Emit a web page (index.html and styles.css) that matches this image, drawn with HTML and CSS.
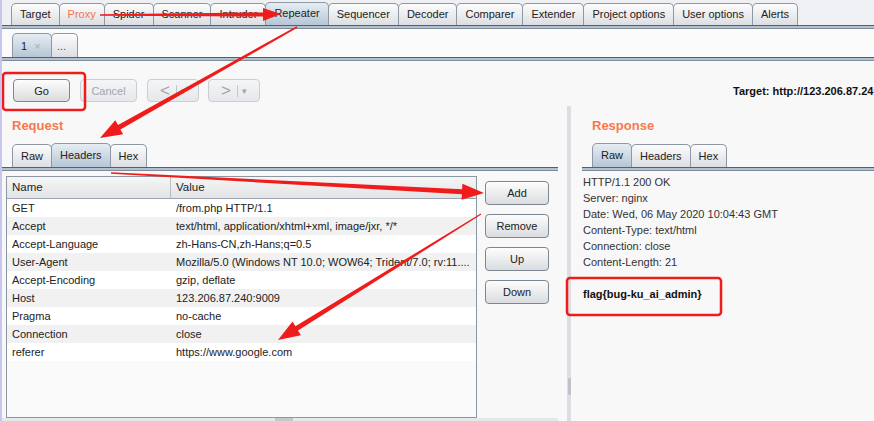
FILE: index.html
```html
<!DOCTYPE html>
<html lang="en">
<head>
  <meta charset="UTF-8">
  <title>Burp Suite - Repeater</title>
  <link rel="stylesheet" href="styles.css">
</head>
<body>
  <div class="app">
    <div class="maintabs">
      <div class="tab">Target</div>
      <div class="tab proxy">Proxy</div>
      <div class="tab">Spider</div>
      <div class="tab">Scanner</div>
      <div class="tab">Intruder</div>
      <div class="tab sel">Repeater</div>
      <div class="tab">Sequencer</div>
      <div class="tab">Decoder</div>
      <div class="tab">Comparer</div>
      <div class="tab">Extender</div>
      <div class="tab">Project options</div>
      <div class="tab">User options</div>
      <div class="tab">Alerts</div>
    </div>
    <div class="tabline"></div>
    <div class="subtabs">
      <div class="tab sel num">1 <span class="close">×</span></div>
      <div class="tab more">...</div>
    </div>
    <div class="tabline"></div>

    <div class="toolbar">
      <div class="btn go">Go</div>
      <div class="btn dis cancel">Cancel</div>
      <div class="btn dis nav"><span class="chev">&lt;</span><span class="sep"></span><span class="drop">▾</span></div>
      <div class="btn dis nav"><span class="chev">&gt;</span><span class="sep"></span><span class="drop">▾</span></div>
      <div class="target">Target: http://123.206.87.240:9009</div>
    </div>

    <div class="split">
      <div class="pane req">
        <div class="ptitle">Request</div>
        <div class="ptabs">
          <div class="tab">Raw</div>
          <div class="tab sel">Headers</div>
          <div class="tab">Hex</div>
        </div>
        <div class="tabline"></div>
        <div class="reqbody">
          <div class="table">
            <div class="row head"><div class="c1">Name</div><div class="c2">Value</div></div>
            <div class="row"><div class="c1">GET</div><div class="c2">/from.php HTTP/1.1</div></div>
            <div class="row"><div class="c1">Accept</div><div class="c2">text/html, application/xhtml+xml, image/jxr, */*</div></div>
            <div class="row"><div class="c1">Accept-Language</div><div class="c2">zh-Hans-CN,zh-Hans;q=0.5</div></div>
            <div class="row"><div class="c1">User-Agent</div><div class="c2">Mozilla/5.0 (Windows NT 10.0; WOW64; Trident/7.0; rv:11....</div></div>
            <div class="row"><div class="c1">Accept-Encoding</div><div class="c2">gzip, deflate</div></div>
            <div class="row"><div class="c1">Host</div><div class="c2">123.206.87.240:9009</div></div>
            <div class="row"><div class="c1">Pragma</div><div class="c2">no-cache</div></div>
            <div class="row"><div class="c1">Connection</div><div class="c2">close</div></div>
            <div class="row"><div class="c1">referer</div><div class="c2">https://www.google.com</div></div>
          </div>
          <div class="side">
            <div class="btn sbtn">Add</div>
            <div class="btn sbtn">Remove</div>
            <div class="btn sbtn">Up</div>
            <div class="btn sbtn">Down</div>
          </div>
        </div>
        <div class="hscroll"><div class="hthumb"></div></div>
      </div>

      <div class="divider"><div class="grip"></div></div>

      <div class="pane resp">
        <div class="ptitle">Response</div>
        <div class="ptabs">
          <div class="tab sel">Raw</div>
          <div class="tab">Headers</div>
          <div class="tab">Hex</div>
        </div>
        <div class="tabline"></div>
        <div class="resptext">
          <div>HTTP/1.1 200 OK</div>
          <div>Server: nginx</div>
          <div>Date: Wed, 06 May 2020 10:04:43 GMT</div>
          <div>Content-Type: text/html</div>
          <div>Connection: close</div>
          <div>Content-Length: 21</div>
          <div>&nbsp;</div>
          <div class="flag">flag{bug-ku_ai_admin}</div>
        </div>
      </div>
    </div>

    <svg class="marks" width="874" height="421" viewBox="0 0 874 421">
      <rect x="3" y="73" width="82" height="37" rx="3" fill="none" stroke="#f01c1c" stroke-width="2.5"/>
      <rect x="567" y="278" width="154" height="37" rx="3" fill="none" stroke="#f01c1c" stroke-width="2.5"/>
      <polygon fill="#f01c1c" points="100,14.3 263,12.5 263,8 281,14 263,21 263,16.5 100,15.7"/>
      <polygon fill="#f01c1c" points="297.4,27.7 120.4,129.4 123.1,134.2 100,138 115.3,120.2 118,125 296.6,26.3"/>
      <polygon fill="#f01c1c" points="111,173.8 461.9,194.3 461.6,199.8 484,193 462.4,183.8 462.1,189.3 111,172.2"/>
      <polygon fill="#f01c1c" points="481.3,214.5 298,330.5 300.9,335.2 278,340 292.5,321.6 295.4,326.3 480.7,213.5"/>
    </svg>
  </div>
</body>
</html>
```

FILE: styles.css
```css
html, body {
    margin: 0;
    height: 100%;
    overflow: hidden;
}

body {
    font-family: "Liberation Sans", Arial, sans-serif;
    font-size: 11px;
    color: #222;
    background: #f8f8f8;
}

.app {
    position: relative;
    width: 872px;
    height: 421px;
    border-left: 2px solid #c9c6ee;
    display: flex;
    flex-direction: column;
    overflow: hidden;
}

/* tabs */
.maintabs, .subtabs, .ptabs {
    display: flex;
    align-items: flex-end;
    white-space: nowrap;
}
.maintabs {
    height: 25px;
    padding-left: 9px;
    background: #eef0f4;
}
.subtabs {
    height: 28px;
    padding-left: 10px;
    background: #fbfbfb;
}
.tab {
    flex-shrink: 0;
    height: 21px;
    line-height: 21px;
    padding: 0 8px;
    border: 1px solid #8e98a4;
    border-bottom: none;
    border-radius: 5px 5px 0 0;
    background: linear-gradient(#fcfcfc, #dcdee2);
    margin-right: -1px;
    color: #222;
}
.tab.sel {
    height: 22px;
    background: linear-gradient(#e6edf3, #b6c6d5);
}
.tab.proxy {
    color: #f37250;
}
.subtabs .tab {
    height: 23px;
    line-height: 24px;
}
.tab.num {
    width: 22px;
    padding: 0 8px;
}
.tab .close {
    color: #a8adb3;
    margin-left: 4px;
}
.tab.more {
    width: 15px;
    padding: 0 5px;
    color: #555;
}

.tabline {
    height: 2px;
    border-top: 1px solid #55606d;
    border-bottom: 1px solid #808c99;
    background: #b2c1d0;
}

/* toolbar */
.toolbar {
    display: flex;
    align-items: center;
    padding: 18px 0 4px 11px;
    height: 23px;
    white-space: nowrap;
}
.btn {
    flex-shrink: 0;
    box-sizing: border-box;
    height: 23px;
    border: 1px solid #7d8792;
    border-radius: 4px;
    background: linear-gradient(#fdfdfd, #dadcdf);
    display: flex;
    align-items: center;
    justify-content: center;
    font-size: 11px;
    color: #222;
}
.btn.go {
    width: 57px;
}
.btn.dis {
    border-color: #c9ced4;
    background: linear-gradient(#f4f5f6, #e6e8eb);
    color: #a3a6aa;
}
.btn.cancel {
    width: 57px;
    margin-left: 10px;
}
.btn.nav {
    width: 52px;
    margin-left: 10px;
    justify-content: flex-start;
    padding-left: 12px;
}
.btn.nav + .btn.nav {
    margin-left: 9px;
}
.chev {
    font-size: 17px;
    color: #a0a4a9;
    line-height: 17px;
}
.sep {
    width: 1px;
    height: 12px;
    background: #c4c8cd;
    margin: 0 4px 0 6px;
}
.drop {
    font-size: 9px;
    color: #a0a4a9;
}
.target {
    flex-shrink: 0;
    margin-left: 473px;
    font-weight: bold;
    color: #111;
}

/* split panes */
.split {
    display: flex;
    flex: 1;
    min-height: 0;
}
.pane {
    display: flex;
    flex-direction: column;
}
.pane.req {
    width: 556px;
    flex-shrink: 0;
}
.pane.resp {
    flex: 1;
}
.ptitle {
    padding: 12px 0 0 10px;
    height: 16px;
    line-height: 16px;
    margin-bottom: 10px;
    font-size: 13px;
    font-weight: bold;
    color: #f7794d;
}
.ptabs {
    padding-left: 10px;
    height: 23px;
}
.ptabs .tab {
    height: 22px;
    line-height: 23px;
}
.ptabs .tab.sel {
    height: 23px;
}

.divider {
    width: 24px;
    flex-shrink: 0;
    background: linear-gradient(to right, transparent 9px, #dcdee4 9px, #dcdee4 13px, transparent 13px);
}
.grip {
    margin: 272px 0 0 10px;
    width: 3px;
    height: 17px;
    background: #bfc2c8;
    border-radius: 1px;
}

/* request headers table */
.reqbody {
    display: flex;
    padding: 5px 0 0 4px;
    flex: 1;
    min-height: 0;
}
.table {
    flex-shrink: 0;
    box-sizing: border-box;
    width: 471px;
    height: 242px;
    border: 1px solid #8c97a4;
    background: #fafafa;
}
.row {
    display: flex;
    height: 18px;
    line-height: 18px;
    background: #fff;
    white-space: nowrap;
    overflow: hidden;
}
.row:nth-child(odd) {
    background: #f1f1f1;
}
.row.head {
    height: 21px;
    line-height: 21px;
    background: linear-gradient(#f6f6f6, #e2e3e5);
    border-bottom: 1px solid #9ba4ae;
    font-size: 11.5px;
}
.c1 {
    width: 158px;
    padding-left: 5px;
}
.c2 {
    padding-left: 6px;
    flex: 1;
}
.row.head .c2 {
    border-left: 1px solid #b7bec6;
    padding-left: 5px;
}
.side {
    display: flex;
    flex-direction: column;
    gap: 9px;
    margin: 5px 0 0 8px;
}
.btn.sbtn {
    width: 64px;
    height: 24px;
}
.hscroll {
    height: 3px;
    margin-top: 1px;
    background: #e6e7ea;
}
.hthumb {
    margin-left: 273px;
    width: 18px;
    height: 3px;
    background: #c4c7cc;
}

/* response */
.resptext {
    padding: 3px 0 0 1px;
    line-height: 16px;
    color: #333;
}
.resptext .flag {
    font-weight: bold;
    color: #111;
}

.marks {
    position: absolute;
    left: -2px;
    top: 0;
    pointer-events: none;
}
```
